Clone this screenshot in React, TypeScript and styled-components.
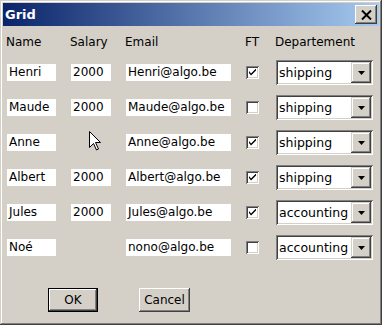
import { Fragment } from "react"
import styled, { createGlobalStyle } from "styled-components"

const GlobalStyle = createGlobalStyle`
  html, body {
    margin: 0;
    padding: 0;
    background: #d4d0c8;
  }
  * {
    box-sizing: border-box;
  }
`

const rows = [
  { name: "Henri", salary: "2000", email: "Henri@algo.be", ft: true, dept: "shipping" },
  { name: "Maude", salary: "2000", email: "Maude@algo.be", ft: false, dept: "shipping" },
  { name: "Anne", salary: "", email: "Anne@algo.be", ft: true, dept: "shipping" },
  { name: "Albert", salary: "2000", email: "Albert@algo.be", ft: true, dept: "shipping" },
  { name: "Jules", salary: "2000", email: "Jules@algo.be", ft: true, dept: "accounting" },
  { name: "Noé", salary: "", email: "nono@algo.be", ft: false, dept: "accounting" },
]

const Window = styled.div`
  position: relative;
  width: 382px;
  height: 325px;
  display: flex;
  flex-direction: column;
  padding: 3px;
  background: #d4d0c8;
  font-family: "DejaVu Sans", Verdana, sans-serif;
  font-size: 12px;
  color: #000;
  box-shadow: inset -1px -1px #404040, inset 1px 1px #d4d0c8,
    inset -2px -2px #808080, inset 2px 2px #ffffff;
`

const TitleBar = styled.div`
  height: 23px;
  display: flex;
  align-items: center;
  justify-content: space-between;
  padding-left: 2px;
  background: linear-gradient(to right, #0a246a, #a6caf0);
`

const Title = styled.span`
  color: #fff;
  font-weight: bold;
  font-size: 13px;
`

const CloseButton = styled.div`
  width: 22px;
  height: 19px;
  margin-right: 2px;
  display: flex;
  align-items: center;
  justify-content: center;
  background: #d4d0c8;
  box-shadow: inset -1px -1px #404040, inset 1px 1px #ffffff,
    inset -2px -2px #808080;
`

const Grid = styled.div`
  display: grid;
  grid-template-columns: 64px 55px 120px 30px 96px;
  grid-template-rows: 26px repeat(6, 35px);
  align-items: center;
  margin: 3px 0 0 4px;
`

const Header = styled.div`
  margin-left: -1px;
  white-space: nowrap;
`

const Field = styled.div<{ $width: number }>`
  width: ${(p) => p.$width}px;
  height: 17px;
  line-height: 17px;
  padding-left: 2px;
  background: #fff;
  white-space: nowrap;
  overflow: hidden;
`

const Check = styled.div`
  width: 13px;
  height: 13px;
  display: flex;
  align-items: center;
  justify-content: center;
  background: #fff;
  box-shadow: inset 1px 1px #808080, inset -1px -1px #ffffff,
    inset 2px 2px #404040, inset -2px -2px #d4d0c8;
`

const Select = styled.div`
  width: 97px;
  height: 25px;
  display: flex;
  align-items: center;
  justify-content: space-between;
  padding: 2px;
  background: #fff;
  box-shadow: inset 1px 1px #808080, inset -1px -1px #ffffff,
    inset 2px 2px #404040, inset -2px -2px #d4d0c8;
`

const SelectText = styled.span`
  padding-left: 1px;
  white-space: nowrap;
  font-size: 12.5px;
`

const DropButton = styled.div`
  width: 20px;
  height: 21px;
  display: flex;
  align-items: center;
  justify-content: center;
  background: #d4d0c8;
  box-shadow: inset -1px -1px #404040, inset 1px 1px #d4d0c8,
    inset -2px -2px #808080, inset 2px 2px #ffffff;
`

const Footer = styled.div`
  display: flex;
  gap: 41px;
  margin: 23px 0 0 45px;
`

const Button = styled.div<{ $default?: boolean; $width: number }>`
  width: ${(p) => p.$width}px;
  height: 24px;
  display: flex;
  align-items: center;
  justify-content: center;
  background: #d4d0c8;
  box-shadow: ${(p) =>
    p.$default
      ? "inset 0 0 0 1px #000, inset -2px -2px #404040, inset 2px 2px #ffffff, inset -3px -3px #808080"
      : "inset -1px -1px #404040, inset 1px 1px #ffffff, inset -2px -2px #808080"};
`

const Cursor = styled.svg`
  position: absolute;
  left: 89px;
  top: 131px;
`

const Tick = () => (
  <svg width="7" height="7" viewBox="0 0 7 7">
    <path d="M0 2 L0 4 L2 6.5 L7 1.5 L7 -0.5 L2 4.5 Z" fill="#000" />
  </svg>
)

const Arrow = () => (
  <svg width="7" height="4" viewBox="0 0 7 4">
    <path d="M0 0 H7 L3.5 4 Z" fill="#000" />
  </svg>
)

export default function App() {
  return (
    <>
      <GlobalStyle />
      <Window>
        <TitleBar>
          <Title>Grid</Title>
          <CloseButton>
            <svg width="11" height="10" viewBox="0 0 11 10">
              <path d="M1 0.5 L10 9.5 M10 0.5 L1 9.5" stroke="#000" strokeWidth="2" />
            </svg>
          </CloseButton>
        </TitleBar>
        <Grid>
          <Header>Name</Header>
          <Header>Salary</Header>
          <Header>Email</Header>
          <Header>FT</Header>
          <Header>Departement</Header>
          {rows.map((r) => (
            <Fragment key={r.name}>
              <Field $width={49}>{r.name}</Field>
              {r.salary ? <Field $width={40}>{r.salary}</Field> : <div />}
              <Field $width={105}>{r.email}</Field>
              <Check>{r.ft && <Tick />}</Check>
              <Select>
                <SelectText>{r.dept}</SelectText>
                <DropButton>
                  <Arrow />
                </DropButton>
              </Select>
            </Fragment>
          ))}
        </Grid>
        <Footer>
          <Button $default $width={50}>OK</Button>
          <Button $width={51}>Cancel</Button>
        </Footer>
        <Cursor width="12" height="20" viewBox="0 0 12 20">
          <path
            d="M0.5 0.5 L0.5 16.5 L4.5 12.5 L7.5 19 L9.5 18 L6.5 11.5 L11.5 11.5 Z"
            fill="#fff"
            stroke="#000"
            strokeWidth="1"
          />
        </Cursor>
      </Window>
    </>
  )
}
